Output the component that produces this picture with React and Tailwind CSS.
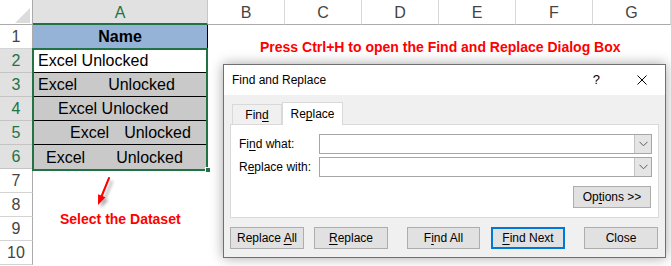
import React from "react";

const cols = ["A", "B", "C", "D", "E", "F", "G"];

// each data row: left padding and gap between the two words (px)
const rows = [
  { pl: 5, words: ["Excel Unlocked"], bg: "bg-white" },
  { pl: 5, gap: 31, words: ["Excel", "Unlocked"], bg: "bg-[#c9c9c9]" },
  { pl: 25, words: ["Excel Unlocked"], bg: "bg-[#c9c9c9]" },
  { pl: 37, gap: 15, words: ["Excel", "Unlocked"], bg: "bg-[#c9c9c9]" },
  { pl: 13, gap: 31, words: ["Excel", "Unlocked"], bg: "bg-[#c9c9c9]" },
];

const Chevron = () => (
  <svg width="9" height="6" viewBox="0 0 9 6">
    <polyline points="0.5,0.8 4.5,4.8 8.5,0.8" fill="none" stroke="#5a5a5a" strokeWidth="1" />
  </svg>
);

const ComboBox = () => (
  <div className="flex h-[20px] w-[333px] border border-[#a6a6a6] bg-white">
    <div className="flex-1" />
    <div className="flex w-[17px] items-center justify-center border-l border-[#c4c4c4] bg-[#e5e5e5]">
      <Chevron />
    </div>
  </div>
);

const Button = ({ children, primary, className = "" }) => (
  <div
    className={`flex h-[22px] items-center justify-center bg-[#e1e1e1] text-[12px] text-black ${
      primary ? "border-2 border-[#0078d7]" : "border border-[#adadad]"
    } ${className}`}
  >
    <span className="whitespace-pre">{children}</span>
  </div>
);

const App = () => {
  return (
    <div className="relative h-[266px] w-[671px] overflow-hidden bg-white font-['Liberation_Sans',Arial,sans-serif]">
      {/* sheet grid */}
      <div className="grid grid-cols-[33px_175px_77px_77px_77px_77px_77px_78px] grid-rows-[25px_repeat(10,24px)]">
        {/* corner */}
        <div className="relative border-r border-b border-[#ababab] bg-white">
          <svg className="absolute left-[15px] top-[8px]" width="15" height="15" viewBox="0 0 15 15">
            <polygon points="15,0 15,15 0,15" fill="#dcdcdc" />
          </svg>
        </div>
        {cols.map((c) =>
          c === "A" ? (
            <div
              key={c}
              className="flex items-center justify-center border-r border-b-2 border-r-[#c6c6c6] border-b-[#217346] bg-[#e1e1e1] pt-[2px] text-[16px] text-[#217346]"
            >
              {c}
            </div>
          ) : (
            <div
              key={c}
              className="flex items-center justify-center border-r border-b border-r-[#d8d8d8] border-b-[#ababab] bg-white pt-[2px] text-[16px] text-[#444]"
            >
              {c}
            </div>
          )
        )}

        {/* row 1 */}
        <div className="flex items-center justify-center border-r border-b border-r-[#ababab] border-b-[#d4d4d4] bg-white text-[16px] text-[#444]">
          1
        </div>
        <div className="flex items-center justify-center border-r border-black bg-[#95b3d7] text-[16px] font-bold text-black">
          Name
        </div>
        {cols.slice(1).map((c) => (
          <div key={c} />
        ))}

        {/* rows 2-6 */}
        {rows.map((r, i) => (
          <React.Fragment key={i}>
            <div className="flex items-center justify-center border-r border-b border-r-[#ababab] border-b-[#c4c4c4] bg-[#e1e1e1] text-[16px] text-[#217346]">
              {i + 2}
            </div>
            <div
              className={`flex items-center border-r border-black pt-[1px] text-[16px] text-black ${r.bg} ${i < 4 ? "border-b" : ""}`}
              style={{ paddingLeft: r.pl }}
            >
              <span className="whitespace-pre">{r.words[0]}</span>
              {r.words[1] && (
                <span className="whitespace-pre" style={{ marginLeft: r.gap }}>
                  {r.words[1]}
                </span>
              )}
            </div>
            {cols.slice(1).map((c) => (
              <div key={c} />
            ))}
          </React.Fragment>
        ))}

        {/* rows 7-10 */}
        {[7, 8, 9, 10].map((n) => (
          <React.Fragment key={n}>
            <div className="flex items-center justify-center border-r border-b border-r-[#ababab] border-b-[#d4d4d4] bg-white text-[16px] text-[#444]">
              {n}
            </div>
            <div />
            {cols.slice(1).map((c) => (
              <div key={c} />
            ))}
          </React.Fragment>
        ))}
      </div>

      {/* selection box */}
      <div className="absolute left-[32px] top-[48px] h-[123px] w-[176px] border-2 border-[#217346]" />
      <div className="absolute left-[205px] top-[167px] h-[6px] w-[6px] border border-white bg-[#217346]" />

      {/* annotations */}
      <div className="absolute left-[260px] top-[39px] whitespace-nowrap text-[14px] font-bold leading-[17px] text-[#ff0000]">
        Press Ctrl+H to open the Find and Replace Dialog Box
      </div>
      <div className="absolute left-[60px] top-[211px] whitespace-nowrap text-[14px] font-bold leading-[17px] text-[#ff0000]">
        Select the Dataset
      </div>
      <svg className="absolute left-[88px] top-[172px]" width="32" height="40" viewBox="0 0 32 40">
        <defs>
          <filter id="sh" x="-50%" y="-50%" width="200%" height="200%">
            <feGaussianBlur stdDeviation="1.5" />
          </filter>
        </defs>
        <g transform="translate(3,3)" filter="url(#sh)" opacity="0.45">
          <line x1="21" y1="6" x2="13.8" y2="23.75" stroke="#555" strokeWidth="2" />
          <polygon points="10,33 17.5,25.3 10.1,22.2" fill="#555" />
        </g>
        <line x1="21" y1="6" x2="13.8" y2="23.75" stroke="#ff0000" strokeWidth="2" strokeLinecap="round" />
        <polygon points="10,33 17.5,25.3 10.1,22.2" fill="#ff0000" />
      </svg>

      {/* Find and Replace dialog */}
      <div className="absolute left-[223px] top-[64px] flex h-[194px] w-[443px] flex-col border border-[#707070] bg-[#f0f0f0] text-[12px] text-black shadow-[0_0_12px_rgba(0,0,0,0.35)]">
        {/* title bar */}
        <div className="flex h-[30px] items-center justify-between bg-white pl-[8px] pr-[18px]">
          <span className="text-[12px]">Find and Replace</span>
          <div className="flex items-center gap-[37px]">
            <span className="text-[13px]">?</span>
            <svg width="10" height="10" viewBox="0 0 10 10">
              <path d="M0.5 0.5 L9.5 9.5 M9.5 0.5 L0.5 9.5" stroke="#000" strokeWidth="1" />
            </svg>
          </div>
        </div>

        <div className="flex flex-col px-[6px] pt-[7px]">
          {/* tabs */}
          <div className="relative z-10 flex h-[22px] items-end pl-[2px]">
            <div className="flex h-[20px] w-[50px] items-center justify-center border border-b-0 border-[#d9d9d9] bg-[#f0f0f0]">
              <span>
                Fin<u className="underline-offset-2">d</u>
              </span>
            </div>
            <div className="mb-[-1px] flex h-[23px] w-[61px] items-center justify-center border border-b-0 border-[#d9d9d9] bg-white">
              <span>
                Re<u className="underline-offset-2">p</u>lace
              </span>
            </div>
          </div>

          {/* panel */}
          <div className="flex h-[94px] flex-col border border-[#d9d9d9] bg-white pl-[8px] pr-[6px] pt-[9px]">
            <div className="flex items-center justify-between">
              <span>
                Fi<u className="underline-offset-2">n</u>d what:
              </span>
              <ComboBox />
            </div>
            <div className="mt-[3px] flex items-center justify-between">
              <span>
                R<u className="underline-offset-2">e</u>place with:
              </span>
              <ComboBox />
            </div>
            <div className="mt-[9px] flex justify-end pr-[1px]">
              <Button className="w-[78px]">
                Op<u className="underline-offset-2">t</u>ions &gt;&gt;
              </Button>
            </div>
          </div>

          {/* bottom buttons */}
          <div className="mt-[9px] flex">
            <Button className="w-[74px]">
              Replace <u className="underline-offset-2">A</u>ll
            </Button>
            <Button className="ml-[10px] w-[74px]">
              <u className="underline-offset-2">R</u>eplace
            </Button>
            <Button className="ml-[19px] w-[73px]">
              F<u className="underline-offset-2">i</u>nd All
            </Button>
            <Button primary className="ml-[11px] w-[74px]">
              <u className="underline-offset-2">F</u>ind Next
            </Button>
            <Button className="ml-[19px] w-[74px]">Close</Button>
          </div>
        </div>
      </div>
    </div>
  );
};

export default App;
